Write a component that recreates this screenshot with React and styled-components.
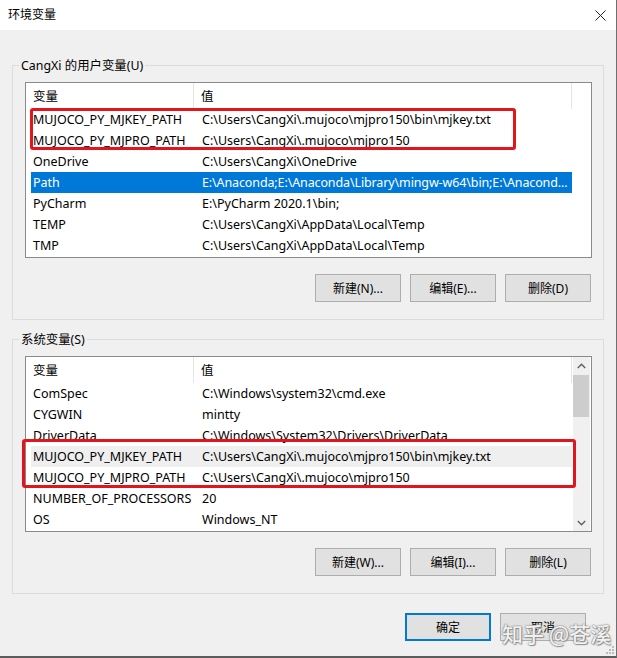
import React from 'react';
import styled, { createGlobalStyle } from 'styled-components';

const GlobalStyle = createGlobalStyle`
  html, body {
    margin: 0;
    padding: 0;
    background: #f0f0f0;
  }
  body {
    font-family: "Noto Sans", "Noto Sans CJK SC", sans-serif;
    font-size: 12px;
    color: #000;
  }
`;

const userVars = [
  { name: 'MUJOCO_PY_MJKEY_PATH', value: 'C:\\Users\\CangXi\\.mujoco\\mjpro150\\bin\\mjkey.txt' },
  { name: 'MUJOCO_PY_MJPRO_PATH', value: 'C:\\Users\\CangXi\\.mujoco\\mjpro150' },
  { name: 'OneDrive', value: 'C:\\Users\\CangXi\\OneDrive' },
  { name: 'Path', value: 'E:\\Anaconda;E:\\Anaconda\\Library\\mingw-w64\\bin;E:\\Anacond...', selected: true },
  { name: 'PyCharm', value: 'E:\\PyCharm 2020.1\\bin;' },
  { name: 'TEMP', value: 'C:\\Users\\CangXi\\AppData\\Local\\Temp' },
  { name: 'TMP', value: 'C:\\Users\\CangXi\\AppData\\Local\\Temp' },
];

const systemVars = [
  { name: 'ComSpec', value: 'C:\\Windows\\system32\\cmd.exe' },
  { name: 'CYGWIN', value: 'mintty' },
  { name: 'DriverData', value: 'C:\\Windows\\System32\\Drivers\\DriverData' },
  { name: 'MUJOCO_PY_MJKEY_PATH', value: 'C:\\Users\\CangXi\\.mujoco\\mjpro150\\bin\\mjkey.txt', hover: true },
  { name: 'MUJOCO_PY_MJPRO_PATH', value: 'C:\\Users\\CangXi\\.mujoco\\mjpro150' },
  { name: 'NUMBER_OF_PROCESSORS', value: '20' },
  { name: 'OS', value: 'Windows_NT' },
];

const VarList = ({ rows, scroll, mark }) => (
  <ListView>
    <ListContent>
      <Header>
        <HeaderCell $w={168}>变量</HeaderCell>
        <HeaderCell $w={378}>值</HeaderCell>
      </Header>
      {rows.map((r) => (
        <Row key={r.name} $selected={r.selected} $hover={r.hover}>
          <NameCell>{r.name}</NameCell>
          <ValueCell $tight={r.selected}>{r.value}</ValueCell>
        </Row>
      ))}
    </ListContent>
    {scroll && (
      <ScrollBar>
        <ScrollArrow>
          <svg width="9" height="6" viewBox="0 0 9 6">
            <path d="M0.8 5 L4.5 1.3 L8.2 5" fill="none" stroke="#606060" strokeWidth="1.4" />
          </svg>
        </ScrollArrow>
        <Thumb />
        <ScrollArrow $bottom>
          <svg width="9" height="6" viewBox="0 0 9 6">
            <path d="M0.8 1 L4.5 4.7 L8.2 1" fill="none" stroke="#606060" strokeWidth="1.4" />
          </svg>
        </ScrollArrow>
      </ScrollBar>
    )}
    {mark && <RedMark style={mark} />}
  </ListView>
);

const App = () => (
  <Window>
    <GlobalStyle />
    <TitleBar>
      <Title>环境变量</Title>
      <svg width="11" height="11" viewBox="0 0 11 11">
        <path d="M0.5 0.5 L10.5 10.5 M10.5 0.5 L0.5 10.5" stroke="#222" strokeWidth="1" />
      </svg>
    </TitleBar>
    <Body>
      <Group>
        <Legend>CangXi 的用户变量(U)</Legend>
        <VarList rows={userVars} mark={{ left: 4, top: 25, width: 486, height: 42 }} />
        <ButtonRow>
          <Button>新建(N)...</Button>
          <Button>编辑(E)...</Button>
          <Button>删除(D)</Button>
        </ButtonRow>
      </Group>
      <Group $second>
        <Legend>系统变量(S)</Legend>
        <VarList rows={systemVars} scroll mark={{ left: -4, top: 82, width: 554, height: 49 }} />
        <ButtonRow>
          <Button>新建(W)...</Button>
          <Button>编辑(I)...</Button>
          <Button>删除(L)</Button>
        </ButtonRow>
      </Group>
      <Footer>
        <Button $default>确定</Button>
        <Button>取消</Button>
      </Footer>
    </Body>
    <Watermark>知乎 @苍溪</Watermark>
    <Grip>
      <svg width="10" height="10" viewBox="0 0 10 10">
        <rect x="7" y="1" width="2" height="2" fill="#bcbcbc" />
        <rect x="4" y="4" width="2" height="2" fill="#bcbcbc" />
        <rect x="7" y="4" width="2" height="2" fill="#bcbcbc" />
        <rect x="1" y="7" width="2" height="2" fill="#bcbcbc" />
        <rect x="4" y="7" width="2" height="2" fill="#bcbcbc" />
        <rect x="7" y="7" width="2" height="2" fill="#bcbcbc" />
      </svg>
    </Grip>
  </Window>
);

export default App;

const Window = styled.div`
  position: relative;
  width: 617px;
  height: 658px;
  box-sizing: border-box;
  background: #f0f0f0;
  border-right: 1px solid #6f6f6f;
  border-bottom: 2px solid #5c5c5c;
  overflow: hidden;
`;

const TitleBar = styled.div`
  height: 30px;
  background: #fff;
  display: flex;
  align-items: center;
  justify-content: space-between;
  padding: 0 10px 0 8px;
  box-sizing: border-box;
`;

const Title = styled.span`
  font-size: 12px;
  line-height: 16px;
`;

const Body = styled.div`
  padding: 27px 12px 0 12px;
`;

const Group = styled.fieldset`
  margin: ${(p) => (p.$second ? '11px' : '0')} 0 0 0;
  padding: 0 11px 17px 12px;
  border: 1px solid #dcdcdc;
  min-width: 0;
`;

const Legend = styled.legend`
  margin-left: -6px;
  padding: 0 2px;
  line-height: 17px;
  font-size: 12.4px;
`;

const ListView = styled.div`
  position: relative;
  margin-top: 8px;
  height: 176px;
  box-sizing: border-box;
  border: 1px solid #8a8a8a;
  background: #fff;
  display: flex;
  font-size: 12.5px;
`;

const ListContent = styled.div`
  flex: 1;
  min-width: 0;
  overflow: hidden;
`;

const Header = styled.div`
  display: flex;
  height: 26px;
`;

const HeaderCell = styled.div`
  width: ${(p) => p.$w}px;
  flex: none;
  box-sizing: border-box;
  padding-left: 7px;
  border-right: 1px solid #e5e5e5;
  display: flex;
  align-items: center;
  padding-bottom: 1px;
`;

const Row = styled.div`
  display: flex;
  align-items: center;
  height: 21px;
  width: 541px;
  margin-left: 5px;
  background: ${(p) => (p.$selected ? '#0078d7' : p.$hover ? '#efefef' : 'transparent')};
  color: ${(p) => (p.$selected ? '#fff' : '#000')};
`;

const NameCell = styled.div`
  width: 163px;
  flex: none;
  box-sizing: border-box;
  padding-left: 2px;
  white-space: nowrap;
  overflow: hidden;
`;

const ValueCell = styled.div`
  flex: 1;
  min-width: 0;
  padding-left: 8px;
  white-space: nowrap;
  overflow: hidden;
  letter-spacing: ${(p) => (p.$tight ? '-0.12px' : 'normal')};
`;

const ScrollBar = styled.div`
  width: 17px;
  margin-right: 1px;
  background: #f0f0f0;
  display: flex;
  flex-direction: column;
`;

const ScrollArrow = styled.div`
  height: 17px;
  display: flex;
  align-items: center;
  justify-content: center;
  margin-top: ${(p) => (p.$bottom ? 'auto' : '0')};
`;

const Thumb = styled.div`
  height: 42px;
  margin: 1px 1px 0 0;
  background: #cdcdcd;
`;

const RedMark = styled.div`
  position: absolute;
  box-sizing: border-box;
  border: 3px solid #e3141b;
  border-radius: 3px;
  pointer-events: none;
`;

const ButtonRow = styled.div`
  display: flex;
  justify-content: flex-end;
  gap: 9px;
  margin-top: 16px;
  padding-right: 1px;
`;

const Button = styled.button`
  width: 86px;
  height: 28px;
  box-sizing: border-box;
  background: #e1e1e1;
  border: ${(p) => (p.$default ? '2px solid #0078d7' : '1px solid #adadad')};
  font-family: "Noto Sans", "Noto Sans CJK SC", sans-serif;
  font-size: 12px;
  color: #000;
  padding: 0;
`;

const Footer = styled.div`
  display: flex;
  justify-content: flex-end;
  gap: 9px;
  margin-top: 19px;
  padding-right: 18px;
`;

const Watermark = styled.div`
  position: absolute;
  left: 502px;
  top: 619px;
  font-family: "Noto Sans CJK SC", sans-serif;
  font-size: 21px;
  font-weight: 500;
  line-height: 28px;
  color: rgba(255, 255, 255, 0.92);
  text-shadow: 0 0 1px #6a6a6a, 0 0 2px #8a8a8a, 1px 1px 1px #9a9a9a;
  pointer-events: none;
`;

const Grip = styled.div`
  position: absolute;
  right: 1px;
  bottom: 1px;
  display: flex;
`;
